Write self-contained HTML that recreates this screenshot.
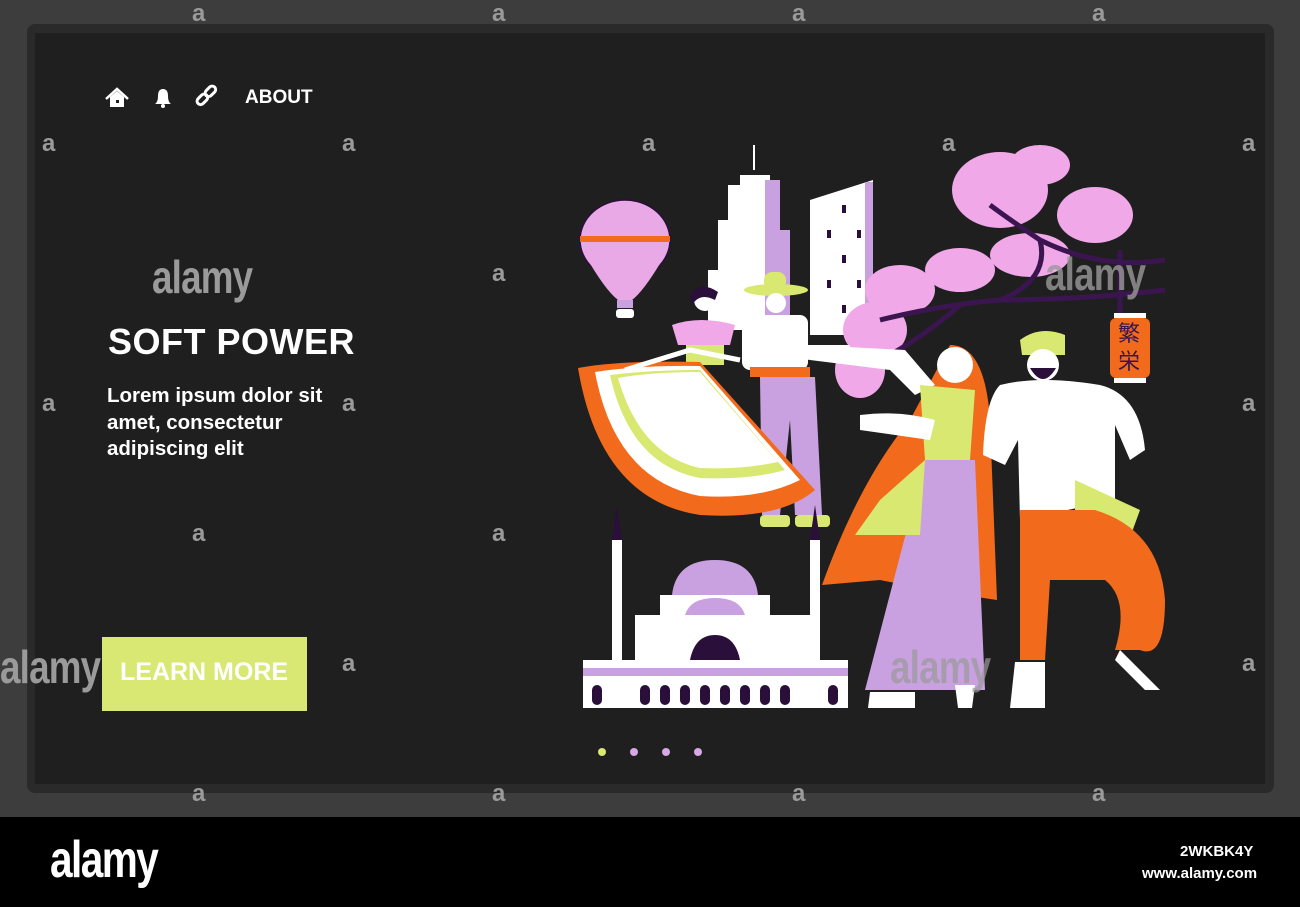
<!DOCTYPE html>
<html><head><meta charset="utf-8"><style>
*{margin:0;padding:0;box-sizing:border-box}
body{width:1300px;height:907px;background:#3d3d3d;position:relative;overflow:hidden;font-family:"Liberation Sans",sans-serif}
.panel{position:absolute;left:27px;top:24px;width:1247px;height:769px;background:#2a2a2a;border-radius:8px}
.inner{position:absolute;left:35px;top:33px;width:1230px;height:751px;background:#1f1f1f}
.bot{position:absolute;left:0;top:817px;width:1300px;height:90px;background:#000}
.t{position:absolute;color:#fff;font-weight:bold}
.wm{position:absolute;color:#9a9a9a;font-weight:bold;font-family:"Liberation Sans Narrow","Liberation Sans",sans-serif;letter-spacing:-1px}
</style></head><body>
<div class="panel"></div><div class="inner"></div>
<svg style="position:absolute;left:0;top:0" width="1300" height="907">
 <path d="M106 99 L117 89 L128 99" fill="none" stroke="#fff" stroke-width="2.5"/>
 <path d="M110 97 L117 91 L124 97 V107 H110Z" fill="#fff"/>
 <rect x="116" y="100" width="3" height="3" fill="#1f1f1f"/>
 <path d="M155 104 Q158 102 158 96 Q158 89 163 89 Q168 89 168 96 Q168 102 171 104 Z" fill="#fff"/><circle cx="163" cy="106" r="2" fill="#fff"/>
 <g fill="none" stroke="#fff" stroke-width="3"><rect x="196" y="96" width="12" height="7" rx="3.5" transform="rotate(-45 202 99)"/><rect x="204" y="88" width="12" height="7" rx="3.5" transform="rotate(-45 210 91)"/></g>
 <ellipse cx="625" cy="240" rx="45" ry="40" fill="#e9a8e6" stroke="#2a0f3a" stroke-width="1.5"/>
 <path d="M585 255 Q605 290 618 300 H632 Q645 290 665 255" fill="#e9a8e6"/>
 <rect x="580" y="236" width="90" height="6" fill="#f26a1b"/>
 <rect x="617" y="300" width="16" height="8" fill="#c9a1e0"/><rect x="616" y="309" width="18" height="9" rx="3" fill="#fff"/>
 <rect x="753" y="145" width="2" height="25" fill="#fff"/>
 <path d="M740 175 H770 V185 H780 V230 H790 V330 H708 V270 H718 V220 H728 V185 H740Z" fill="#fff"/>
 <path d="M765 180 H780 V230 H790 V330 H765Z" fill="#c9a1e0"/>
 <path d="M810 200 L873 180 V335 H810Z" fill="#fff"/><rect x="865" y="182" width="8" height="153" fill="#c9a1e0"/>
 <g fill="#2a0f3a"><rect x="842" y="205" width="4" height="8"/><rect x="857" y="230" width="4" height="8"/><rect x="827" y="230" width="4" height="8"/><rect x="842" y="255" width="4" height="8"/><rect x="857" y="280" width="4" height="8"/><rect x="827" y="280" width="4" height="8"/><rect x="842" y="305" width="4" height="8"/></g>
 <g fill="#f0a8e8"><ellipse cx="1000" cy="190" rx="48" ry="38"/><ellipse cx="1095" cy="215" rx="38" ry="28"/><ellipse cx="1040" cy="165" rx="30" ry="20"/><ellipse cx="960" cy="270" rx="35" ry="22"/><ellipse cx="1030" cy="255" rx="40" ry="22"/><ellipse cx="900" cy="290" rx="35" ry="25"/><ellipse cx="875" cy="330" rx="32" ry="28"/><ellipse cx="860" cy="370" rx="25" ry="28"/></g>
 <g stroke="#3b1550" stroke-width="5" fill="none"><path d="M1165 260 Q1100 270 1040 240 Q1010 220 990 205"/><path d="M1165 290 Q1080 300 1000 300 Q940 305 880 320"/><path d="M1040 240 Q1050 280 1000 300"/><path d="M1120 250 V320"/><path d="M960 305 Q920 340 880 360"/></g>
 <rect x="1110" y="318" width="40" height="60" rx="6" fill="#f26a1b"/><rect x="1114" y="313" width="32" height="5" fill="#fff"/><rect x="1114" y="378" width="32" height="5" fill="#fff"/>
 <ellipse cx="776" cy="290" rx="32" ry="6" fill="#d8e870"/><rect x="764" y="272" width="22" height="18" rx="8" fill="#d8e870"/>
 <circle cx="776" cy="303" r="10" fill="#fff"/>
 <rect x="742" y="315" width="66" height="55" rx="8" fill="#fff"/>
 <rect x="750" y="367" width="60" height="10" fill="#f26a1b"/>
 <path d="M760 377 H815 L822 515 H795 L790 420 L780 515 H762Z" fill="#c9a1e0"/>
 <rect x="760" y="515" width="30" height="12" rx="4" fill="#d8e870"/><rect x="795" y="515" width="35" height="12" rx="4" fill="#d8e870"/>
 <path d="M805 345 L850 345 L848 358 L805 360Z" fill="#fff"/>
 <circle cx="705" cy="300" r="11" fill="#fff"/><path d="M690 295 Q700 280 718 292 L715 300 Q700 292 692 305Z" fill="#2a0f3a"/>
 <path d="M672 325 Q700 315 735 325 L730 345 H678Z" fill="#f0a8e8"/>
 <rect x="686" y="345" width="38" height="20" fill="#d8e870"/>
 <path d="M578 368 Q620 360 700 362 L815 490 Q780 520 700 515 Q600 500 578 368Z" fill="#f26a1b"/>
 <path d="M595 372 Q640 365 700 366 L800 480 Q760 500 700 496 Q615 480 595 372Z" fill="#fff"/>
 <path d="M610 375 Q650 370 700 370 L785 470 Q750 480 700 478 Q630 465 610 375Z" fill="#d8e870"/>
 <path d="M618 378 Q650 372 700 372 L778 462 Q740 470 700 468 Q640 455 618 378Z" fill="#fff"/>
 <path d="M625 370 L690 350 L740 360" stroke="#fff" stroke-width="5" fill="none"/>
 <rect x="612" y="540" width="10" height="168" fill="#fff"/><path d="M612 540 L617 505 L622 540Z" fill="#2a0f3a"/>
 <rect x="810" y="540" width="10" height="168" fill="#fff"/><path d="M810 540 L815 505 L820 540Z" fill="#2a0f3a"/>
 <path d="M672 595 Q676 560 715 560 Q754 560 758 595Z" fill="#c9a1e0"/>
 <rect x="660" y="595" width="110" height="30" fill="#fff"/>
 <path d="M685 615 Q690 598 715 598 Q740 598 745 615Z" fill="#c9a1e0"/>
 <rect x="635" y="615" width="175" height="45" fill="#fff"/>
 <path d="M690 660 Q695 635 715 635 Q735 635 740 660Z" fill="#2a0f3a"/>
 <rect x="583" y="660" width="265" height="48" fill="#fff"/>
 <rect x="583" y="668" width="265" height="8" fill="#c9a1e0"/>
 <g fill="#2a0f3a"><rect x="592" y="685" width="10" height="20" rx="5"/><rect x="640" y="685" width="10" height="20" rx="5"/><rect x="660" y="685" width="10" height="20" rx="5"/><rect x="680" y="685" width="10" height="20" rx="5"/><rect x="700" y="685" width="10" height="20" rx="5"/><rect x="720" y="685" width="10" height="20" rx="5"/><rect x="740" y="685" width="10" height="20" rx="5"/><rect x="760" y="685" width="10" height="20" rx="5"/><rect x="780" y="685" width="10" height="20" rx="5"/><rect x="828" y="685" width="10" height="20" rx="5"/></g>
 <path d="M950 345 Q985 345 990 420 L997 600 L930 590 L880 580 L822 585 Q860 480 910 420Z" fill="#f26a1b"/>
 <circle cx="955" cy="365" r="18" fill="#fff"/>
 <path d="M810 345 L905 350 L935 385 L915 395 L890 370 L810 360Z" fill="#fff"/>
 <path d="M920 385 L975 390 L970 460 H925Z" fill="#d8e870"/>
 <path d="M860 415 Q900 410 935 420 L930 440 L860 430Z" fill="#fff"/>
 <path d="M925 460 H975 L985 690 H865Z" fill="#c9a1e0"/>
 <path d="M925 460 L880 500 L855 535 H920Z" fill="#d8e870"/>
 <path d="M870 692 H915 V708 H868Z M955 685 H975 L972 708 H958Z" fill="#fff"/>
 <path d="M1020 340 Q1040 325 1065 335 V355 H1022Z" fill="#d8e870"/><circle cx="1043" cy="365" r="16" fill="#fff"/>
 <path d="M1030 368 Q1043 390 1056 368Z" fill="#2a0f3a"/>
 <path d="M1000 385 Q1040 375 1100 385 Q1140 395 1145 450 L1130 460 L1115 425 V500 L1020 520 L1018 440 L1005 465 L983 455 Q985 400 1000 385Z" fill="#fff"/>
 <path d="M1075 480 L1140 510 L1120 565 L1075 530Z" fill="#d8e870"/>
 <path d="M1020 510 H1095 Q1160 530 1165 600 Q1165 660 1140 650 L1115 650 Q1130 600 1105 580 L1050 580 L1045 660 L1020 660Z" fill="#f26a1b"/>
 <path d="M1015 662 H1045 V708 H1010Z M1120 650 L1160 690 L1145 690 L1115 660Z" fill="#fff"/>
 <circle cx="602" cy="752" r="4" fill="#d8e870"/><circle cx="634" cy="752" r="4" fill="#d6a8e6"/><circle cx="666" cy="752" r="4" fill="#d6a8e6"/><circle cx="698" cy="752" r="4" fill="#d6a8e6"/>
</svg>
<div class="t" style="left:1118px;top:318px;width:26px;font-size:22px;line-height:28px;color:#3b1550;font-family:'Noto Sans CJK JP',sans-serif;font-weight:normal">繁栄</div>
<div class="t" style="left:245px;top:87px;font-size:19px">ABOUT</div>
<div class="t" style="left:108px;top:321px;font-size:36px;letter-spacing:0.5px">SOFT POWER</div>
<div class="t" style="left:107px;top:383px;font-size:20.5px;line-height:26.5px">Lorem ipsum dolor sit<br>amet, consectetur<br>adipiscing elit</div>
<div style="position:absolute;left:102px;top:637px;width:205px;height:74px;background:#d9e872"></div>
<div class="t" style="left:120px;top:658px;font-size:25px">LEARN MORE</div>
<div class="wm" style="left:152px;top:250px;font-size:46px;transform:scaleX(.8);transform-origin:left">alamy</div>
<div class="wm" style="left:1045px;top:247px;font-size:46px;transform:scaleX(.8);transform-origin:left;opacity:.8">alamy</div>
<div class="wm" style="left:890px;top:640px;font-size:46px;transform:scaleX(.8);transform-origin:left;opacity:.7">alamy</div>
<div class="wm" style="left:0px;top:640px;font-size:46px;transform:scaleX(.8);transform-origin:left">alamy</div>
<div class="wm" style="left:192px;top:0px;font-size:24px">a</div><div class="wm" style="left:492px;top:0px;font-size:24px">a</div><div class="wm" style="left:792px;top:0px;font-size:24px">a</div><div class="wm" style="left:1092px;top:0px;font-size:24px">a</div>
<div class="wm" style="left:192px;top:780px;font-size:24px">a</div><div class="wm" style="left:492px;top:780px;font-size:24px">a</div><div class="wm" style="left:792px;top:780px;font-size:24px">a</div><div class="wm" style="left:1092px;top:780px;font-size:24px">a</div>
<div class="wm" style="left:42px;top:130px;font-size:24px">a</div><div class="wm" style="left:342px;top:130px;font-size:24px">a</div><div class="wm" style="left:642px;top:130px;font-size:24px">a</div><div class="wm" style="left:942px;top:130px;font-size:24px">a</div><div class="wm" style="left:1242px;top:130px;font-size:24px">a</div>
<div class="wm" style="left:42px;top:390px;font-size:24px">a</div><div class="wm" style="left:342px;top:390px;font-size:24px">a</div><div class="wm" style="left:1242px;top:390px;font-size:24px">a</div>
<div class="wm" style="left:342px;top:650px;font-size:24px">a</div><div class="wm" style="left:1242px;top:650px;font-size:24px">a</div>
<div class="wm" style="left:492px;top:260px;font-size:24px">a</div><div class="wm" style="left:192px;top:520px;font-size:24px">a</div><div class="wm" style="left:492px;top:520px;font-size:24px">a</div>
<div class="bot"></div>
<div class="t" style="left:50px;top:830px;font-size:52px;letter-spacing:-2px;transform:scaleX(.78);transform-origin:left;font-family:'Liberation Sans Narrow','Liberation Sans',sans-serif">alamy</div>
<div class="t" style="left:1180px;top:843px;font-size:15px">2WKBK4Y</div>
<div class="t" style="left:1142px;top:865px;font-size:15px">www.alamy.com</div>
</body></html>
